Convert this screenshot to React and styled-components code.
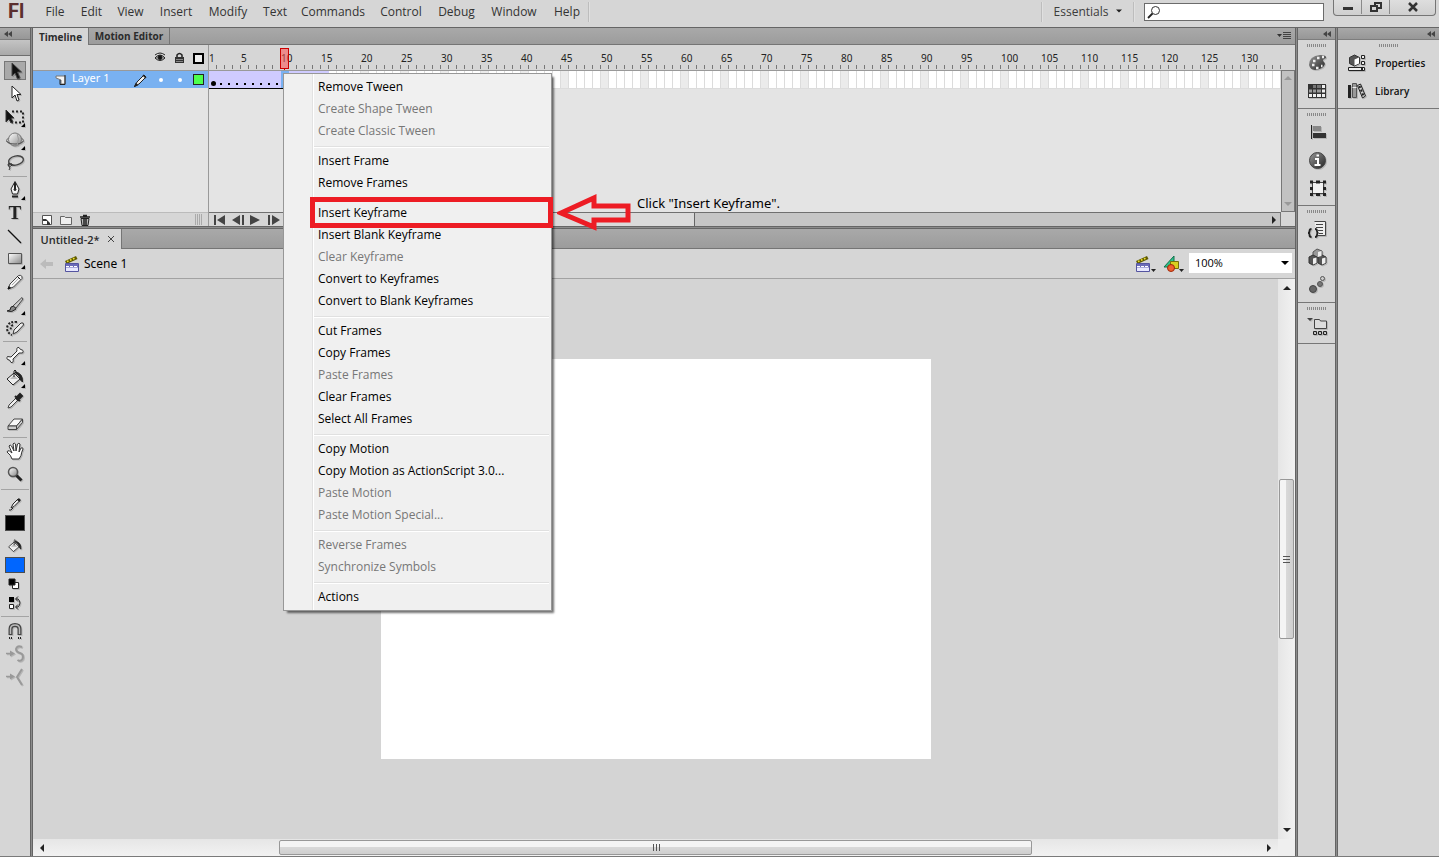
import React from 'react'
import styled, { createGlobalStyle, css } from 'styled-components'

const GlobalStyle = createGlobalStyle`
    * {
        box-sizing: border-box;
    }
    body {
        margin: 0;
        overflow: hidden;
        background: #d6d6d6;
        font-family: "Open Sans", "Noto Sans", sans-serif;
        font-size: 12px;
        color: #2b2b2b;
    }
    button, input, select {
        font: inherit;
        color: inherit;
    }
    button {
        display: flex;
        align-items: center;
        justify-content: center;
        padding: 0;
        border: 0;
        background: none;
        white-space: nowrap;
    }
    svg {
        display: block;
        flex: none;
    }
`

const Page = styled.div`
    position: relative;
    display: flex;
    flex-direction: column;
    height: 100vh;
    border-bottom: 1px solid #7a7a7a;
`

const MenuBar = styled.header`
    display: flex;
    flex: none;
    height: 27px;
    padding-left: 8px;
    color: #333;
    .menus {
        display: flex;
        flex: 1;
        height: 22px;
        padding-left: 13px;
    }
    .search {
        display: flex;
        align-items: center;
        width: 180px;
        height: 18px;
        margin: 3px 9px 0 9px;
        padding-left: 2px;
        border: 1px solid #6b6b6b;
        background: #fff;
    }
    .search input {
        flex: 1;
        min-width: 0;
        height: 14px;
        padding: 0;
        border: 0;
        outline: 0;
        background: none;
    }
`

const Logo = styled.div`
    width: 16px;
    color: #5b2f2f;
    font-family: Roboto, sans-serif;
    font-size: 20px;
    font-weight: 700;
    line-height: 22px;
`

const MenuButton = styled.button`
    width: ${(p) => p.$width}px;
    font-size: 12px;
`

const Rule = styled.div`
    width: 2px;
    height: 20px;
    margin-top: 2px;
    border-left: 1px solid #bdbdbd;
    border-right: 1px solid #e0e0e0;
`

const Workspace = styled.button`
    width: 90px;
    height: 22px;
    gap: 8px;
    color: #3c3c3c;
`

const WindowButtons = styled.div`
    display: flex;
    width: 103px;
    height: 16px;
    margin-right: 3px;
    border: 1px solid #757575;
    border-top: 0;
    border-radius: 0 0 4px 4px;
    background: linear-gradient(#dedede, #cfcfcf);
    button {
        width: 28px;
        height: 14px;
        border-right: 1px solid #8a8a8a;
    }
    button:last-child {
        flex: 1;
        border-right: 0;
    }
`

const Body = styled.div`
    display: flex;
    flex: 1;
    min-height: 0;
    border-top: 1px solid #666;
`

const Divider = styled.div`
    flex: none;
    width: 3px;
    border: 1px solid #646464;
    border-width: 0 1px;
    background: #8c8c8c;
`

const CollapseBar = styled.button`
    width: 100%;
    height: 12px;
    flex: none;
    background: linear-gradient(#a8a8a8, #979797);
    && {
        justify-content: ${(p) => (p.$left ? 'flex-start' : 'flex-end')};
        padding: 0 4px;
        border-bottom: 1px solid #7d7d7d;
    }
`

const ToolPanel = styled.aside`
    display: flex;
    flex: none;
    flex-direction: column;
    align-items: center;
    width: 30px;
    .grip {
        width: 100%;
        height: 16px;
        margin-bottom: 3px;
        border-bottom: 1px solid #6e6e6e;
        background: linear-gradient(#c4c4c4, #a9a9a9);
    }
`

const Tool = styled.button`
    width: 22px;
    height: ${(p) => (p.$small ? 18 : 23)}px;
    svg {
        filter: drop-shadow(1px 1px 0 rgba(0, 0, 0, 0.15));
    }
    ${(p) =>
        p.$active &&
        css`
            && {
                height: 19px;
                margin: 2px 0;
                border: 1px solid #777;
                background: #a9a9a9;
            }
        `}
`

const ToolRule = styled.hr`
    flex: none;
    width: ${(p) => (p.$wide ? 28 : 24)}px;
    height: 1px;
    margin: ${(p) => (p.$wide ? '4px 0 2px' : '2px 0 1px')};
    border: 0;
    background: #a4a4a4;
`

const Swatch = styled.button`
    flex: none;
    width: 20px;
    height: 16px;
    margin-bottom: 3px;
    && {
        border: 1px solid #4d4d4d;
        background: ${(p) => p.$color};
    }
`

const Center = styled.main`
    display: flex;
    flex: 1;
    flex-direction: column;
    min-width: 0;
`

const TabStrip = styled.div`
    display: flex;
    flex: none;
    height: ${(p) => p.$height}px;
    border-bottom: 1px solid #757575;
    background: linear-gradient(#a9a9a9, #9c9c9c);
    .options {
        margin-left: auto;
        padding-right: 4px;
    }
`

const Tab = styled.button`
    width: ${(p) => p.$width}px;
    gap: 8px;
    font-size: ${(p) => (p.$document ? 11 : 10)}px;
    font-weight: ${(p) => (p.$document ? 600 : 700)};
    && {
        border-right: 1px solid #757575;
        background: ${(p) => (p.$active ? '#d6d6d6' : 'transparent')};
    }
    ${(p) =>
        p.$active &&
        css`
            margin-bottom: -1px;
        `}
`

const Timeline = styled.section`
    display: flex;
    flex: none;
    height: 182px;
    background: #e4e4e4;
    border-bottom: 1px solid #666;
`

const Layers = styled.div`
    display: flex;
    flex: none;
    flex-direction: column;
    width: 176px;
    border-right: 1px solid #999;
    .head {
        display: flex;
        align-items: center;
        justify-content: flex-end;
        height: 26px;
        gap: 8px;
        padding-right: 4px;
        border-bottom: 1px solid #999;
        background: #d6d6d6;
    }
    .foot {
        display: flex;
        align-items: center;
        height: 14px;
        margin-top: auto;
        padding: 0 6px 0 8px;
        gap: 7px;
        border-top: 1px solid #bbb;
        background: #d6d6d6;
    }
    .foot svg:last-child {
        margin-left: auto;
    }
`

const LayerRow = styled.div`
    display: flex;
    align-items: center;
    height: 17px;
    padding: 0 4px 0 22px;
    background: #79b1f1;
    color: #fff;
    .name {
        flex: 1;
        padding: 0 0 3px 6px;
        font-family: "Noto Sans", sans-serif;
        font-size: 11px;
        line-height: 14px;
    }
    .dot {
        width: 4px;
        height: 4px;
        margin-left: 11px;
        border-radius: 2px;
        background: #fff;
    }
    .dot + .dot {
        margin-left: 15px;
    }
    .outline {
        width: 11px;
        height: 11px;
        margin-left: 11px;
        border: 1px solid #222;
        background: #4dff4d;
    }
`

const Frames = styled.div`
    display: flex;
    flex: 1;
    flex-direction: column;
    min-width: 0;
`

const Ruler = styled.div`
    display: flex;
    height: 26px;
    flex: none;
    overflow: hidden;
    padding-bottom: 1px;
    border-bottom: 1px solid #999;
    background: #d6d6d6;
`

const RulerCell = styled.div`
    position: relative;
    flex: none;
    width: 8px;
    height: 24px;
    color: #222;
    font-family: "Noto Sans", sans-serif;
    font-size: 10px;
    line-height: 27px;
    background: linear-gradient(#777, #777) no-repeat 7px 20px / 1px 4px;
`

const Playhead = styled.div`
    position: absolute;
    left: -1px;
    top: 3px;
    width: 9px;
    height: 21px;
    border: 1px solid #c00;
    background: rgba(255, 80, 80, 0.55);
    &::after {
        content: "";
        position: absolute;
        left: 3px;
        top: 20px;
        width: 1px;
        height: 6px;
        background: #c00;
    }
`

const frameColors = { tween: '#cfcbff', picked: '#79b1f1', band: '#ebebeb', plain: '#fff' }

const FrameRow = styled.div`
    display: flex;
    overflow: hidden;
    height: 18px;
    flex: none;
`

const Frame = styled.div`
    display: flex;
    flex: none;
    align-items: center;
    justify-content: center;
    width: 8px;
    height: 18px;
    padding-top: 7px;
    background: ${(p) => frameColors[p.$kind]};
    box-shadow: ${(p) =>
        p.$kind === 'tween' || p.$kind === 'picked' ? 'inset 0 -1px #000' : 'inset -1px -1px #dcdcdc'};
    i {
        width: ${(p) => (p.$key ? 5 : 2)}px;
        height: ${(p) => (p.$key ? 5 : 2)}px;
        border-radius: ${(p) => (p.$key ? 3 : 0)}px;
        background: #000;
    }
`

const PlayBar = styled.div`
    display: flex;
    height: 14px;
    flex: none;
    margin-top: auto;
    background: #c6c6c6;
    border-top: 1px solid #707070;
    .transport {
        display: flex;
        align-items: center;
        width: 84px;
        gap: 6px;
        padding-left: 5px;
        background: #d6d6d6;
    }
    .thumb {
        width: 402px;
        background: #dadada;
        border-right: 1px solid #666;
    }
    .next {
        margin-left: auto;
        width: 13px;
        border-right: 1px solid #777;
    }
`

const TimelineScroll = styled.div`
    display: flex;
    flex: none;
    flex-direction: column;
    width: 14px;
    background: #d6d6d6;
    .track {
        display: flex;
        flex: 1;
        flex-direction: column;
        align-items: center;
        justify-content: space-between;
        margin: 25px 0 14px;
        padding: 3px 0;
        border: 1px solid #777;
        background: #c2c2c2;
    }
`

const SplitBar = styled.div`
    flex: none;
    height: 2px;
    background: #8c8c8c;
    border-bottom: 1px solid #666;
`

const SceneBar = styled.div`
    display: flex;
    align-items: center;
    flex: none;
    height: 30px;
    padding: 0 3px 0 7px;
    border-bottom: 1px solid #a2a2a2;
    .scene {
        flex: 1;
        padding-left: 4px;
        font-family: "Noto Sans", sans-serif;
        color: #000;
    }
    .tools {
        display: flex;
        gap: 7px;
        padding-right: 5px;
    }
`

const ZoomBox = styled.label`
    display: flex;
    align-items: center;
    width: 103px;
    height: 20px;
    margin-bottom: 2px;
    padding-right: 3px;
    background: #fff;
    font-size: 11px;
    select {
        flex: 1;
        padding: 0 0 1px 6px;
        border: 0;
        outline: 0;
        appearance: none;
        background: none;
        color: #000;
    }
`

const StageGrid = styled.section`
    display: grid;
    flex: 1;
    grid-template-columns: minmax(0, 1fr) 17px;
    grid-template-rows: minmax(0, 1fr) 17px;
    min-height: 0;
    background: #efefef;
    .pasteboard {
        display: flex;
        align-items: center;
        justify-content: center;
        overflow: hidden;
        background: #d4d4d4;
    }
`

const Canvas = styled.div`
    flex: none;
    width: 550px;
    height: 400px;
    background: #fff;
`

const ScrollBar = styled.div`
    display: flex;
    flex-direction: ${(p) => (p.$vertical ? 'column' : 'row')};
    align-items: center;
    justify-content: space-between;
    padding: ${(p) => (p.$vertical ? '5px 0' : '0 5px')};
    background: linear-gradient(${(p) => (p.$vertical ? '90deg' : '180deg')}, #e6e6e6, #f2f2f2);
    .thumb {
        display: flex;
        align-items: center;
        justify-content: center;
        width: ${(p) => (p.$vertical ? '15px' : '61%')};
        height: ${(p) => (p.$vertical ? '29%' : '15px')};
        border: 1px solid #989898;
        border-radius: 2px;
        background: linear-gradient(${(p) => (p.$vertical ? '90deg' : '180deg')}, #f4f4f4 0 45%, #d8d8d8 50%, #cfcfcf);
    }
`

const Dock = styled.aside`
    display: flex;
    flex: none;
    flex-direction: column;
    width: ${(p) => p.$width}px;
`

const DockGroup = styled.div`
    display: flex;
    flex-direction: column;
    align-items: center;
    padding: 4px 0 3px;
    border-bottom: 1px solid #777;
    .grip {
        width: 19px;
        height: 3px;
        margin-bottom: 2px;
        background: repeating-linear-gradient(90deg, #888 0 1px, #d6d6d6 1px 2px);
    }
`

const DockButton = styled.button`
    width: 100%;
    height: 28px;
    gap: 8px;
    svg {
        filter: drop-shadow(1px 1px 0 rgba(0, 0, 0, 0.15));
    }
    ${(p) =>
        p.$labelled &&
        css`
            && {
                justify-content: flex-start;
                padding-left: 9px;
            }
            font-size: 10px;
            font-weight: 600;
            color: #111;
        `}
`

const ContextMenu = styled.div`
    position: absolute;
    left: 283px;
    top: 73px;
    width: 269px;
    padding: 2px;
    border: 1px solid #979797;
    background: linear-gradient(90deg, #f0f0f0 28px, #e2e2e2 28px 29px, #fff 29px 30px, #f0f0f0 30px);
    box-shadow: 3px 3px 2px -1px rgba(0, 0, 0, 0.55);
`

const MenuItem = styled.button`
    width: 100%;
    height: 22px;
    color: #000;
    && {
        justify-content: flex-start;
        padding: 0 0 2px 32px;
    }
    &:disabled {
        color: #777;
    }
`

const MenuGroup = styled.div`
    & + & {
        padding-top: 8px;
        background: linear-gradient(#e0e0e0, #e0e0e0) no-repeat 28px 4px / 100% 1px, linear-gradient(#fff, #fff) no-repeat 28px 5px / 100% 1px;
    }
`

const Highlight = styled.div`
    position: absolute;
    left: 310px;
    top: 197px;
    width: 243px;
    height: 31px;
    border: 5px solid #ed1c24;
    pointer-events: none;
`

const Callout = styled.div`
    position: absolute;
    left: 557px;
    top: 193px;
    display: flex;
    gap: 5px;
    color: #000;
    font-family: "Noto Sans", sans-serif;
    font-size: 13px;
    line-height: 20px;
    white-space: nowrap;
`

const Svg = ({ w = 20, h = 20, children, ...rest }) => (
    <svg width={w} height={h} viewBox={`0 0 ${w} ${h}`} fill="none" stroke="#222" {...rest}>
        {children}
    </svg>
)

const Corner = () => <path d="M20 16v4h-4z" fill="#000" stroke="none" />

const Triangle = ({ dir = 'down', size = 8, color = '#222' }) => {
    const turn = { down: 0, left: 90, up: 180, right: 270 }[dir]
    return (
        <Svg w={size} h={size} stroke="none">
            <path d={`M0 ${size / 4}h${size}l${-size / 2} ${size / 2}z`} fill={color} transform={`rotate(${turn} ${size / 2} ${size / 2})`} />
        </Svg>
    )
}

const Chevrons = () => (
    <Svg w={8} h={6} stroke="none">
        <path d="M4 0v6L0 3zM8 0v6L4 3z" fill="#444" />
    </Svg>
)

const Pencil = () => (
    <>
        <path d="M3 17l2-5 8.500-8.500q4-1 3.500 3L8.500 15z" fill="#f4f4f4" stroke="#444" />
        <path d="M7 13l7-7" stroke="#aaa" />
        <path d="M3 17l1-2.500L5.500 16zM12.500 4.500l3 3" fill="#111" stroke="#111" />
    </>
)

const Bucket = () => (
    <>
        <path d="M2 11l7-6 6 6-7 6z" fill="#eee" stroke="#222" />
        <path d="M5 11l4-4 4 4z" fill="#bbb" stroke="none" />
        <path d="M9 9V3q1-2 2 0v4" />
        <path d="M10 4q8 1 7.500 10-2-1-3-5-2-3-4.500-5z" fill="#222" />
    </>
)

const tools = {
    select: <path d="M7 2v13l3-3 2.500 6 2.500-1-2.500-6h4z" fill="#111" stroke="#444" />,
    subselect: <path d="M7 2v12l3-3 2 6 2-1-2-5.500h4z" fill="#fff" stroke="#222" />,
    transform: (
        <>
            <path d="M7 4.500h11v11H7" strokeDasharray="2 2" strokeWidth="2" />
            <path d="M1 3v12l3-3 2 4 2-1-2-4h3z" fill="#111" stroke="#333" />
            <Corner />
        </>
    ),
    rotate: (
        <>
            <ellipse cx="10" cy="10.500" rx="8.500" ry="3.500" stroke="#666" />
            <circle cx="10" cy="9.500" r="6.500" fill="url(#ball)" stroke="#777" />
            <path d="M1.500 11q2 3 8.500 3t8.500-3" stroke="#555" />
            <path d="M12 3q3 6 0 13" stroke="#999" />
            <Corner />
        </>
    ),
    lasso: (
        <>
            <ellipse cx="11" cy="7.500" rx="7.500" ry="4.500" transform="rotate(-12 11 7.500)" stroke="#444" strokeWidth="1.400" />
            <path d="M4 10q-2 2 0 3t3-1-3-1q-2 1 1 4l-1 2" stroke="#333" />
        </>
    ),
    pen: (
        <>
            <path d="M10 1.500L6 9l1.500 5h5L14 9z" fill="#f4f4f4" />
            <path d="M10 3v6M7 16.500h6" strokeWidth="2" />
            <circle cx="10" cy="9.500" r="1" fill="#222" />
            <Corner />
        </>
    ),
    text: (
        <text x="3.500" y="16" fontFamily="Liberation Serif" fontSize="19" fontWeight="700" fill="#222" stroke="none">
            T
        </text>
    ),
    line: <path d="M3 4l13 13" stroke="#111" strokeWidth="1.300" />,
    rect: (
        <>
            <path d="M3.500 4.500h13v10h-13z" fill="url(#ball)" stroke="#555" />
            <Corner />
        </>
    ),
    pencil: <Pencil />,
    brush: (
        <>
            <path d="M2 16q4 0 4-4l3-1 2 3q-4 4-9 2z" fill="#888" />
            <path d="M8 11l9-8.500 1 1.500-7 9z" fill="#ccc" stroke="#444" />
            <Corner />
        </>
    ),
    deco: (
        <>
            <path d="M8 16l1-4 7-7q3-1 2.500 2L12 14z" fill="#eee" stroke="#333" />
            <path d="M12 4q-9-1-10 6 0 5 5 7M8 7q-3 1-2 6" strokeWidth="2" strokeDasharray="2 1.500" />
        </>
    ),
    bone: (
        <>
            <path d="M6 12l6-6q-1-4 2-3.500l1.500 2q4 .5 2 3.500l-3.500 0-6 6q1 4-2 3.500l-1.500-2.500q-4-.5-2-3.500z" fill="#f8f8f8" stroke="#333" />
            <Corner />
        </>
    ),
    bucket: (
        <>
            <Bucket />
            <Corner />
        </>
    ),
    dropper: (
        <>
            <path d="M3 17l1-3 7-7 2 2-7 7z" fill="#eee" stroke="#444" />
            <path d="M10 5l5 5M11 7l4-4 2 2-4 4z" strokeWidth="2" fill="#222" />
        </>
    ),
    eraser: (
        <>
            <path d="M3 12l6-7h8.500l-6 7z" fill="#f8f8f8" stroke="#444" strokeLinejoin="round" />
            <path d="M3 12h8.500v3.500H3zM11.500 15.500l6-7V5l-6 7z" fill="#ccc" stroke="#444" strokeLinejoin="round" />
        </>
    ),
    hand: (
        <path
            d="M7 18q-1-4-5-7 .5-2 2.500-1L7 12 4 5q1-2 2.500 0L9 10 8 3q1-2 2.500 0l.5 7 1.500-7q1.500-1.500 2.500 0l-1 8 2-4q2-1 2 1-1.500 3-2 6.500L14 18z"
            fill="#fff"
            stroke="#333"
        />
    ),
    zoom: (
        <>
            <circle cx="8" cy="8" r="4.500" fill="url(#ball)" stroke="#555" strokeWidth="1.500" />
            <path d="M11.500 11.500l5 5" strokeWidth="3" />
        </>
    ),
    stroke: (
        <>
            <path d="M6 14l2-4 5-5 2 1.500-6 6zM4 16q2 1 4-2" fill="#eee" />
            <path d="M13 5l2 2" strokeWidth="2.500" />
        </>
    ),
    fill: (
        <g transform="translate(2 2) scale(.8)">
            <Bucket />
        </g>
    ),
    swatches: (
        <>
            <path d="M7.500 7.500h6v6h-6z" fill="#fff" />
            <path d="M4 4h6v6H4z" fill="#000" />
        </>
    ),
    swap: (
        <>
            <path d="M4 4h5v5H4z" fill="#000" stroke="none" />
            <path d="M4.500 11.500h4v4h-4z" fill="#fff" />
            <path d="M11 6h2q4 4 0 8h-2M13 3.500L10.500 6 13 8.500M13 11.500L10.500 14l2.500 2.500" />
        </>
    ),
    magnet: (
        <>
            <path d="M5.500 14V8q0-4 4.500-4t4.500 4v6" stroke="#444" strokeWidth="4" />
            <path d="M5.500 13V8q0-4 4.500-4t4.500 4v5" stroke="#bbb" strokeWidth="1.500" />
            <path d="M4 17h3M13 17h3" strokeWidth="2" strokeDasharray="1 1" />
        </>
    ),
    smooth: (
        <>
            <path d="M1 9.500h5" stroke="#999" strokeWidth="1.500" />
            <path d="M5 6.500l5 3-5 3z" fill="#999" stroke="none" />
            <path d="M17 3q-5-2-6 2 0 3 4 4t2.500 6q-2 3-5 1" stroke="#999" strokeWidth="2" />
        </>
    ),
    straighten: (
        <>
            <path d="M1 9.500h5" stroke="#999" strokeWidth="1.500" />
            <path d="M5 6.500l5 3-5 3z" fill="#999" stroke="none" />
            <path d="M17 2l-5 8 5 8" stroke="#999" strokeWidth="2" />
        </>
    ),
}

const ToolButton = ({ name, ...rest }) => (
    <Tool aria-label={name} {...rest}>
        <Svg>{tools[name]}</Svg>
    </Tool>
)

const dockIcons = {
    palette: (
        <>
            <path d="M2 12Q2 3 13 2q7 0 6 3-5 2-2 4 2.500 2-2 6-11 5-13-3z" fill="url(#steel)" stroke="none" />
            <path d="M5 12h2.500M6 8h2.500M10 5h2.500M15 4h2M9 15h2.500M14 13h1.500" stroke="#eee" strokeWidth="2.500" />
        </>
    ),
    swatchGrid: (
        <>
            <path d="M1 3h18v14H1z" fill="#333" stroke="none" />
            <path d="M6 5.500h3M10 5.500h4" stroke="#777" strokeWidth="3" />
            <path d="M2 10h3M6 10h3M10 10h4" stroke="#999" strokeWidth="3" />
            <path d="M2 14.500h3M6 14.500h3M10 14.500h4M15 14.500h3M15 10h3M15 5.500h3" stroke="#eee" strokeWidth="3" />
        </>
    ),
    align: (
        <>
            <path d="M4.500 3v14" />
            <path d="M6 4h8v5H6z" fill="#888" stroke="none" />
            <path d="M6 11h13v5H6z" fill="#333" stroke="none" />
        </>
    ),
    info: (
        <>
            <circle cx="10.500" cy="10.500" r="8" fill="url(#steel)" stroke="#444" />
            <path d="M8 9h3v5.500M7.500 15h6M9.500 5.500H12" stroke="#fff" strokeWidth="2" />
        </>
    ),
    transformPanel: (
        <>
            <path d="M5.500 4.500h11v11h-11z" fill="#f2f2f2" stroke="#444" />
            <path d="M3 4h3M9 4h4M16 4h3M3 16.500h3M9 16.500h4M16 16.500h3M4.500 9v3M17.500 9v3" strokeWidth="3" />
        </>
    ),
    code: (
        <>
            <path d="M7.500 2.500h11v14h-8" fill="#eee" stroke="#444" />
            <path d="M9 5.500h7M9 8.500h7M11 11.500h5M12 14.500h4" stroke="#444" />
            <path d="M4.500 10q-2 0-2 2t-1.500 2q1.500 0 1.500 2t2 2M8 10q2 0 2 2t1.500 2q-1.500 0-1.500 2t-2 2" strokeWidth="1.800" />
        </>
    ),
    components: (
        <>
            <path d="M6 5l4-3 5 2v5l-4 2-5-2z" fill="#999" stroke="#555" />
            <path d="M2 10l4-2 4 2v6l-4 2-4-2zM11 10l4-2 4 2v6l-4 2-4-2z" fill="#555" stroke="#333" />
            <path d="M11 5v5l3.500-1V4zM6 11.500v6l3.500-1.500v-5.500zM15 11.500v6l3.500-1.500v-5.500z" fill="#eee" stroke="none" />
        </>
    ),
    motion: (
        <>
            <circle cx="6" cy="14" r="3.500" fill="#666" stroke="#444" />
            <circle cx="13" cy="9" r="2.500" fill="#777" stroke="#555" />
            <circle cx="15.500" cy="3.500" r="2" fill="#ccc" stroke="#555" />
        </>
    ),
    project: (
        <>
            <path d="M0 2h6L3 5z" fill="#444" stroke="none" />
            <path d="M7.500 12.500v-9h5l1 1.500h6v7.500z" fill="#ddd" stroke="#444" />
            <path d="M6.500 15.500h3v3h-3zM11.500 15.500h3v3h-3zM16.500 15.500h3v3h-3z" stroke="#222" />
        </>
    ),
    properties: (
        <>
            <path d="M2.500 4.500l5-2.500 5 2.500v6L7.500 13l-5-2.500z" fill="#555" stroke="#333" />
            <path d="M7.500 6.500l4.500-2v6l-4.500 2z" fill="#fff" stroke="none" />
            <path d="M14.500 2.500h3v3h-3zM14.500 8.500h3v3h-3zM1.500 14.500h16v3h-16z" fill="#eee" />
            <path d="M15 14.500v3" strokeWidth="2" />
        </>
    ),
    library: (
        <>
            <path d="M1 4h3v13H1z" fill="#222" stroke="none" />
            <path d="M5.500 2.500h4v14h-4z" fill="#999" stroke="#555" />
            <path d="M5.500 6.500h4" stroke="#eee" />
            <path d="M10.500 4.500l3-1.500 5 12-3 2z" fill="#ccc" />
            <path d="M12.500 5l4 10" strokeWidth="2" strokeDasharray="2 2" />
        </>
    ),
}

const DockIcon = ({ name }) => <Svg>{dockIcons[name]}</Svg>

const SceneIcon = () => (
    <Svg w={16} h={18} stroke="none">
        <path d="M1 6l11-5 1.500 3L2.500 9z" fill="#5f5a00" />
        <path d="M3 6.500l1.500-.5M6 5.200L7.500 4.500M9 4l1.500-.7" stroke="#f0e030" strokeWidth="1.800" />
        <path d="M1.500 8.500h13v8h-13z" fill="#e8e8ff" stroke="#5454a0" />
        <path d="M2 9h12v3.500H2z" fill="#6a6ab8" />
        <path d="M2 11.500h12" stroke="#fff" strokeDasharray="3 1" />
    </Svg>
)

const layerFoot = (
    <>
        <Svg w={12} h={12}>
            <path d="M1.500 1.500h9v9h-9z" fill="#fff" stroke="#555" />
            <path d="M2 5h3l4 4v2H6V7H2z" fill="#333" stroke="none" />
        </Svg>
        <Svg w={12} h={12}>
            <path d="M.5 10.500v-8h4l1 1h6v7z" fill="#eee" stroke="#666" />
        </Svg>
        <Svg w={12} h={12}>
            <path d="M2 4.500h8l-1 7H3z" fill="#bbb" />
            <path d="M1 3h10M4 1.500h4M5 5v6M7 5v6" strokeWidth="1.500" />
        </Svg>
        <Svg w={8} h={11} stroke="#aaa">
            <path d="M1.500 0v11M3.500 0v11M5.500 0v11M7.500 0v11" />
        </Svg>
    </>
)

const menus = [
    ['File', 36], ['Edit', 37], ['View', 41], ['Insert', 50], ['Modify', 54], ['Text', 40],
    ['Commands', 76], ['Control', 60], ['Debug', 51], ['Window', 64], ['Help', 42],
]

const toolGroups = [
    ['select', 'subselect', 'transform', 'rotate', 'lasso'],
    ['pen', 'text', 'line', 'rect', 'pencil', 'brush', 'deco'],
    ['bone', 'bucket', 'dropper', 'eraser'],
    ['hand', 'zoom'],
]

const dockGroups = [
    ['palette', 'swatchGrid'],
    ['align', 'info', 'transformPanel'],
    ['code', 'components', 'motion'],
    ['project'],
]

// a leading "-" marks a command that is not available
const commands = [
    ['Remove Tween', '-Create Shape Tween', '-Create Classic Tween'],
    ['Insert Frame', 'Remove Frames'],
    ['Insert Keyframe', 'Insert Blank Keyframe', '-Clear Keyframe', 'Convert to Keyframes', 'Convert to Blank Keyframes'],
    ['Cut Frames', 'Copy Frames', '-Paste Frames', 'Clear Frames', 'Select All Frames'],
    ['Copy Motion', 'Copy Motion as ActionScript 3.0...', '-Paste Motion', '-Paste Motion Special...'],
    ['-Reverse Frames', '-Synchronize Symbols'],
    ['Actions'],
]

const frames = Array.from({ length: 134 }, (_, i) => i + 1)

const frameKind = (n) => {
    if (n === 10) return 'picked'
    if (n <= 15) return 'tween'
    return n % 5 === 0 ? 'band' : 'plain'
}

const Toolbox = () => (
    <ToolPanel>
        <CollapseBar $left aria-label="Collapse tools">
            <Chevrons />
        </CollapseBar>
        <div className="grip" />
        {toolGroups.map((group, i) => (
            <React.Fragment key={i}>
                {i > 0 && <ToolRule />}
                {group.map((name) => (
                    <ToolButton key={name} name={name} $active={name === 'select'} />
                ))}
            </React.Fragment>
        ))}
        <ToolRule $wide />
        <ToolButton name="stroke" />
        <Swatch $color="#000" aria-label="Stroke color" />
        <ToolButton name="fill" />
        <Swatch $color="#0066ff" aria-label="Fill color" />
        <ToolButton name="swatches" $small />
        <ToolButton name="swap" $small />
        <ToolRule $wide />
        <ToolButton name="magnet" />
        <ToolButton name="smooth" />
        <ToolButton name="straighten" />
    </ToolPanel>
)

const TimelinePanel = () => (
    <Timeline>
        <Layers>
            <div className="head">
                <Svg w={12} h={12}>
                    <path d="M1 6q5-6 10 0-5 5-10 0z" fill="#aaa" />
                    <circle cx="6" cy="5.500" r="2" fill="#111" />
                    <path d="M1 3q5-4 10 0" />
                </Svg>
                <Svg w={11} h={12}>
                    <path d="M3 6V3q2.500-3 5 0v3" strokeWidth="1.500" />
                    <path d="M1 5h9v6H1z" fill="#333" stroke="none" />
                    <path d="M2 7.500h7M2 9.500h7" stroke="#888" />
                </Svg>
                <Svg w={11} h={12}>
                    <path d="M1 2h9v9H1z" fill="#eee" stroke="#000" strokeWidth="2" />
                </Svg>
            </div>
            <LayerRow>
                <Svg w={11} h={11}>
                    <path d="M1 2h9v8H6V6L1 4z" fill="#f5f5f5" stroke="#777" />
                    <path d="M10 1v9.500H5V6" stroke="#222" />
                </Svg>
                <span className="name">Layer 1</span>
                <Svg w={14} h={14}>
                    <path d="M1 13l2-4 7-7 2 2-7 7z" fill="#eee" />
                    <path d="M1 13l1-2 1 1zM9 2l3 3" strokeWidth="1.500" />
                </Svg>
                <span className="dot" />
                <span className="dot" />
                <span className="outline" />
            </LayerRow>
            <div className="foot">{layerFoot}</div>
        </Layers>
        <Frames>
            <Ruler>
                {frames.map((n) => (
                    <RulerCell key={n}>
                        {n === 1 || n % 5 === 0 ? n : ''}
                        {n === 10 && <Playhead />}
                    </RulerCell>
                ))}
            </Ruler>
            <FrameRow>
                {frames.map((n) => (
                    <Frame key={n} $kind={frameKind(n)} $key={n === 1}>
                        {n <= 10 && <i />}
                    </Frame>
                ))}
            </FrameRow>
            <PlayBar>
                <div className="transport">
                    <Svg w={12} h={10} stroke="none">
                        <path d="M0 0h2v10H0zM11 0v10L3 5z" fill="#444" />
                    </Svg>
                    <Svg w={12} h={10} stroke="none">
                        <path d="M8 0v10L0 5zM10 0h2v10h-2z" fill="#444" />
                    </Svg>
                    <Svg w={12} h={10} stroke="none">
                        <path d="M0 0v10l10-5z" fill="#444" />
                    </Svg>
                    <Svg w={12} h={10} stroke="none">
                        <path d="M0 0h2v10H0zM4 0v10l8-5z" fill="#444" />
                    </Svg>
                </div>
                <div className="thumb" />
                <button className="next" aria-label="Scroll right">
                    <Triangle dir="right" />
                </button>
            </PlayBar>
        </Frames>
        <TimelineScroll>
            <div className="track">
                <Triangle dir="up" color="#999" />
                <Triangle color="#999" />
            </div>
        </TimelineScroll>
    </Timeline>
)

const App = () => {
    return (
        <Page>
            <GlobalStyle />
            <svg width="0" height="0" style={{ position: 'absolute' }}>
                <defs>
                    <linearGradient id="ball" x1="0" y1="0" x2="1" y2="1">
                        <stop offset="0" stopColor="#fff" />
                        <stop offset="1" stopColor="#888" />
                    </linearGradient>
                    <linearGradient id="steel" x1="0" y1="0" x2="1" y2="1">
                        <stop offset="0" stopColor="#999" />
                        <stop offset="1" stopColor="#222" />
                    </linearGradient>
                </defs>
            </svg>
            <MenuBar>
                <Logo>Fl</Logo>
                <nav className="menus">
                    {menus.map(([label, width]) => (
                        <MenuButton key={label} $width={width}>
                            {label}
                        </MenuButton>
                    ))}
                    <Rule />
                </nav>
                <Rule />
                <Workspace>
                    Essentials <Triangle size={6} />
                </Workspace>
                <Rule />
                <label className="search">
                    <Svg w={14} h={14}>
                        <circle cx="8.500" cy="5.500" r="4" stroke="#333" />
                        <path d="M5.500 8.500L1 13" strokeWidth="1.800" />
                    </Svg>
                    <input type="text" aria-label="Search" />
                </label>
                <WindowButtons>
                    <button aria-label="Minimize">
                        <Svg w={10} h={10} stroke="none">
                            <path d="M0 5h10v3H0z" fill="#333" />
                        </Svg>
                    </button>
                    <button aria-label="Restore">
                        <Svg w={12} h={10} stroke="#333" strokeWidth="2">
                            <path d="M5 5V1h6v5H8M1 4h6v5H1z" />
                        </Svg>
                    </button>
                    <button aria-label="Close">
                        <Svg w={10} h={10} stroke="#333" strokeWidth="2.500">
                            <path d="M1 1l8 8M9 1L1 9" />
                        </Svg>
                    </button>
                </WindowButtons>
            </MenuBar>
            <Body>
                <Toolbox />
                <Divider />
                <Center>
                    <TabStrip $height={17}>
                        <Tab $active $width={56}>Timeline</Tab>
                        <Tab $width={81}>Motion Editor</Tab>
                        <button className="options" aria-label="Panel options">
                            <Svg w={14} h={8} stroke="#444">
                                <path d="M6 .5h8M6 2.500h8M6 4.500h8M6 6.500h8" />
                                <path d="M0 2h5L2.500 5z" fill="#333" stroke="none" />
                            </Svg>
                        </button>
                    </TabStrip>
                    <TimelinePanel />
                    <SplitBar />
                    <TabStrip $height={20}>
                        <Tab $active $document $width={89}>
                            Untitled-2*
                            <Svg w={6} h={6} stroke="#444">
                                <path d="M0 0l6 6M6 0L0 6" />
                            </Svg>
                        </Tab>
                    </TabStrip>
                    <SceneBar>
                        <Svg w={24} h={14} stroke="none">
                            <path d="M0 7l6-5v3h7v4H6v3z" fill="#bbb" />
                        </Svg>
                        <SceneIcon />
                        <span className="scene">Scene 1</span>
                        <div className="tools">
                            <button aria-label="Edit scene">
                                <SceneIcon />
                                <Svg w={5} h={18} stroke="none">
                                    <path d="M0 14h5l-2.500 3z" fill="#222" />
                                </Svg>
                            </button>
                            <button aria-label="Edit symbols">
                                <Svg w={16} h={18}>
                                    <path d="M1 12L11 1v11z" fill="#2cc48c" stroke="#12704c" />
                                    <path d="M7.500 6.500h8v7h-8z" fill="#d8d020" stroke="#77700c" />
                                    <circle cx="8" cy="13" r="3.500" fill="#f06030" stroke="#a02808" />
                                </Svg>
                                <Svg w={5} h={18} stroke="none">
                                    <path d="M0 14h5l-2.500 3z" fill="#222" />
                                </Svg>
                            </button>
                        </div>
                        <ZoomBox>
                            <select aria-label="Zoom" defaultValue="100%">
                                <option>50%</option>
                                <option>100%</option>
                                <option>200%</option>
                            </select>
                            <Triangle color="#000" />
                        </ZoomBox>
                    </SceneBar>
                    <StageGrid>
                        <div className="pasteboard">
                            <Canvas />
                        </div>
                        <ScrollBar $vertical>
                            <Triangle dir="up" />
                            <div className="thumb">
                                <Svg w={7} h={8} stroke="#555">
                                    <path d="M0 1.500h7M0 4.500h7M0 7.500h7" />
                                </Svg>
                            </div>
                            <Triangle />
                        </ScrollBar>
                        <ScrollBar>
                            <Triangle dir="left" />
                            <div className="thumb">
                                <Svg w={8} h={7} stroke="#555">
                                    <path d="M1.500 0v7M4.500 0v7M7.500 0v7" />
                                </Svg>
                            </div>
                            <Triangle dir="right" />
                        </ScrollBar>
                    </StageGrid>
                </Center>
                <Divider />
                <Dock $width={37}>
                    <CollapseBar aria-label="Expand dock">
                        <Chevrons />
                    </CollapseBar>
                    {dockGroups.map((group) => (
                        <DockGroup key={group[0]}>
                            <div className="grip" />
                            {group.map((name) => (
                                <DockButton key={name} aria-label={name}>
                                    <DockIcon name={name} />
                                </DockButton>
                            ))}
                        </DockGroup>
                    ))}
                </Dock>
                <Divider />
                <Dock $width={101}>
                    <CollapseBar aria-label="Expand panels">
                        <Chevrons />
                    </CollapseBar>
                    <DockGroup>
                        <div className="grip" />
                        <DockButton $labelled>
                            <DockIcon name="properties" /> Properties
                        </DockButton>
                        <DockButton $labelled>
                            <DockIcon name="library" /> Library
                        </DockButton>
                    </DockGroup>
                </Dock>
            </Body>
            <ContextMenu>
                {commands.map((group) => (
                    <MenuGroup key={group[0]}>
                        {group.map((item) => (
                            <MenuItem key={item} disabled={item.startsWith('-')}>
                                {item.replace(/^-/, '')}
                            </MenuItem>
                        ))}
                    </MenuGroup>
                ))}
            </ContextMenu>
            <Highlight />
            <Callout>
                <Svg w={75} h={39} stroke="#ed1c24" strokeWidth="5">
                    <path d="M4 20L37 5v8h34v14H37v7z" />
                </Svg>
                Click "Insert Keyframe".
            </Callout>
        </Page>
    )
}

export default App
